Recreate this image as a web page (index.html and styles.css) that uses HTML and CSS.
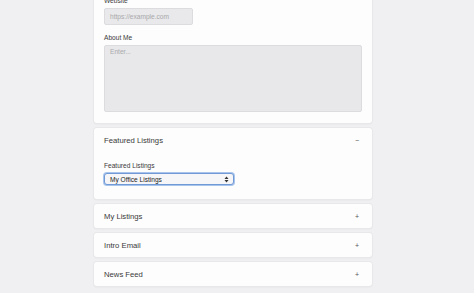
FILE: index.html
```html
<!DOCTYPE html>
<html>
<head>
<meta charset="utf-8">
<link rel="stylesheet" href="styles.css">
</head>
<body>
<div class="page">
  <div class="stack">
    <section class="card">
      <div class="card-body first">
        <div class="field">
          <label class="lbl">Website</label>
          <div class="input short">https://example.com</div>
        </div>
        <div class="field">
          <label class="lbl">About Me</label>
          <div class="textarea">Enter...</div>
        </div>
      </div>
    </section>

    <section class="card">
      <div class="card-head"><span>Featured Listings</span><span class="sign minus">−</span></div>
      <div class="card-body">
        <div class="field">
          <label class="lbl">Featured Listings</label>
          <div class="select"><span>My Office Listings</span>
            <svg class="updown" width="5" height="7" viewBox="0 0 5 7"><path d="M0.5 3 L2.5 0.5 L4.5 3 Z M0.5 4 L2.5 6.5 L4.5 4 Z" fill="#333"/></svg>
          </div>
        </div>
      </div>
    </section>

    <section class="card">
      <div class="card-head"><span>My Listings</span><span class="sign">+</span></div>
    </section>
    <section class="card">
      <div class="card-head"><span>Intro Email</span><span class="sign">+</span></div>
    </section>
    <section class="card">
      <div class="card-head"><span>News Feed</span><span class="sign">+</span></div>
    </section>
  </div>
</div>
</body>
</html>
```
FILE: styles.css
```css
html, body {
  margin: 0;
  padding: 0;
  background: #f0f0f2;
  font-family: "Liberation Sans", Arial, sans-serif;
  color: #3a3a3a;
  height: 100%;
  overflow: hidden;
}
.page {
  display: flex;
  justify-content: flex-start;
  padding-left: 94px;
}
.stack {
  width: 278px;
  display: flex;
  flex-direction: column;
  gap: 5px;
  margin-top: -25px;
}
.card {
  background: #fdfdfd;
  border-radius: 3px;
  box-shadow: 0 0 0 1px #e8e8ea, 0 1px 2px rgba(0,0,0,0.08);
}
.card-body {
  padding: 0 10px 14px 10px;
}
.card-body.first {
  padding-top: 22px;
  padding-bottom: 11px;
}
.field {
  display: flex;
  flex-direction: column;
}
.field + .field { margin-top: 9px; }
.lbl {
  font-size: 6.6px;
  line-height: 8px;
  color: #3a3a3a;
  margin-bottom: 3px;
}
.input {
  box-sizing: border-box;
  height: 17px;
  background: #e9e9eb;
  border: 1px solid #dcdcde;
  border-radius: 2px;
  font-size: 6.6px;
  line-height: 15px;
  color: #a8a8aa;
  padding-left: 5px;
}
.input.short { width: 89px; }
.textarea {
  box-sizing: border-box;
  height: 67px;
  background: #e8e8ea;
  border: 1px solid #dcdcde;
  border-radius: 2px;
  font-size: 6.6px;
  line-height: 12px;
  color: #a8a8aa;
  padding-left: 5px;
}
.card-head {
  display: flex;
  justify-content: space-between;
  align-items: center;
  height: 24px;
  padding: 0 10px;
  font-size: 7.7px;
  color: #3a3a3a;
}
.card .card-head + .card-body { padding-top: 10px; }
.sign {
  font-size: 7px;
  color: #555;
  padding-right: 3px;
}
.select {
  box-sizing: border-box;
  width: 130px;
  height: 12px;
  display: flex;
  align-items: center;
  justify-content: space-between;
  padding: 0 4px 0 5px;
  background: #f6f6f8;
  border: 1px solid #6f9ad6;
  border-radius: 3px;
  box-shadow: 0 0 0 1px #a9c4ec;
  font-size: 6.6px;
  color: #222;
}
.updown { display: block; }
```
